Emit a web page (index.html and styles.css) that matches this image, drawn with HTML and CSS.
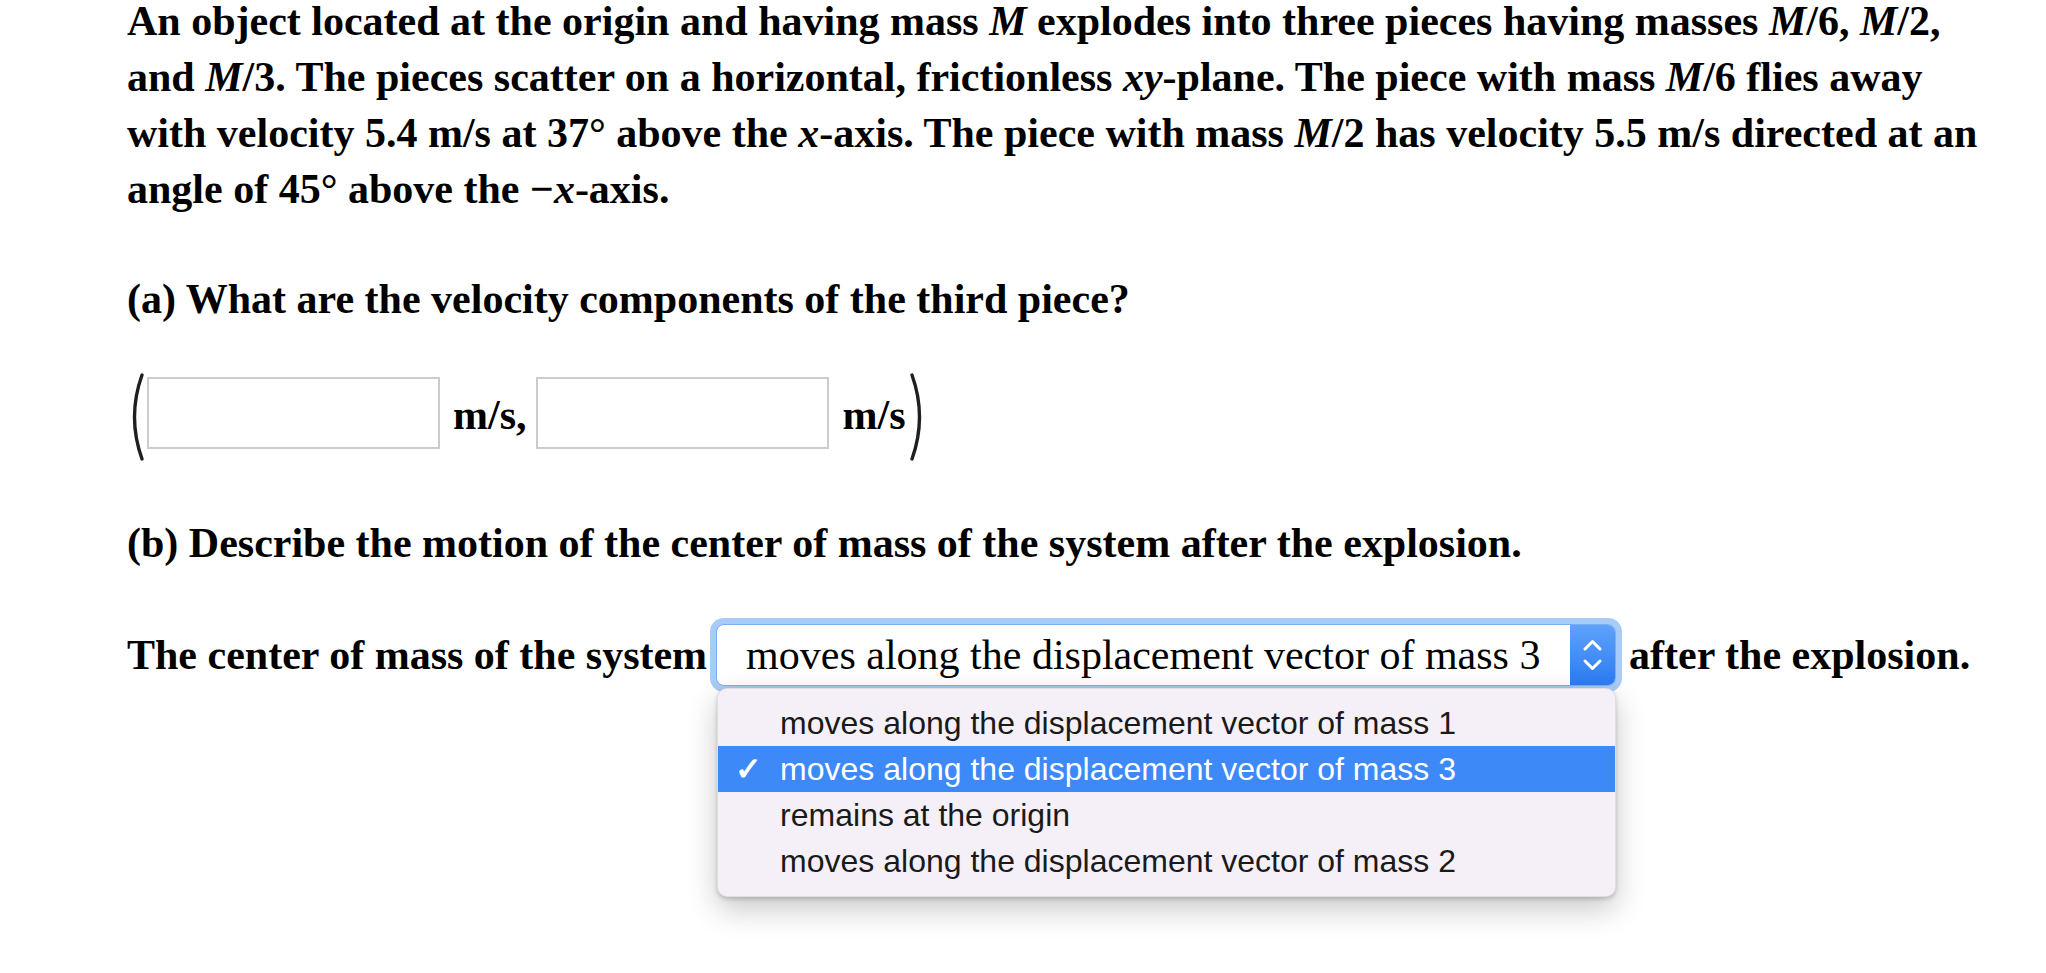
FILE: index.html
```html
<!DOCTYPE html>
<html>
<head>
<meta charset="utf-8">
<link rel="stylesheet" href="styles.css">
</head>
<body>
<div class="page">
  <p class="problem">An object located at the origin and having mass <i>M</i> explodes into three pieces having masses <i>M</i>/6, <i>M</i>/2, and <i>M</i>/3. The pieces scatter on a horizontal, frictionless <i>xy</i>-plane. The piece with mass <i>M</i>/6 flies away with velocity 5.4 m/s at 37° above the <i>x</i>-axis. The piece with mass <i>M</i>/2 has velocity 5.5 m/s directed at an angle of 45° above the −<i>x</i>-axis.</p>

  <p class="question">(a) What are the velocity components of the third piece?</p>

  <div class="answer-row">
    <svg class="paren" viewBox="0 0 18 88" width="18" height="88"><path d="M15 2 Q0 44 15 86" fill="none" stroke="#1f1f1f" stroke-width="3.4" stroke-linecap="round"/></svg>
    <input class="box box-first" type="text">
    <span class="unit">m/s,</span>
    <input class="box box-second" type="text">
    <span class="unit unit-last">m/s</span>
    <svg class="paren paren-right" viewBox="0 0 18 88" width="18" height="88"><path d="M3 2 Q18 44 3 86" fill="none" stroke="#1f1f1f" stroke-width="3.4" stroke-linecap="round"/></svg>
  </div>

  <p class="question question-b">(b) Describe the motion of the center of mass of the system after the explosion.</p>

  <div class="select-row">
    <span class="label">The center of mass of the system</span>
    <div class="select-wrap">
      <div class="select">
        <span class="select-text">moves along the displacement vector of mass 3</span>
        <span class="stepper">
          <svg viewBox="0 0 45 60" width="45" height="60"><path d="M15 24 L22.5 16.5 L30 24" fill="none" stroke="#fff" stroke-width="3" stroke-linecap="round" stroke-linejoin="round"/><path d="M15 36 L22.5 43.5 L30 36" fill="none" stroke="#fff" stroke-width="3" stroke-linecap="round" stroke-linejoin="round"/></svg>
        </span>
      </div>
      <ul class="menu">
        <li class="item">moves along the displacement vector of mass 1</li>
        <li class="item item-selected"><span class="check">✓</span>moves along the displacement vector of mass 3</li>
        <li class="item">remains at the origin</li>
        <li class="item">moves along the displacement vector of mass 2</li>
      </ul>
    </div>
    <span class="label label-after">after the explosion.</span>
  </div>
</div>
</body>
</html>
```

FILE: styles.css
```css
html, body {
  margin: 0;
  padding: 0;
  background: #ffffff;
}

body {
  width: 2046px;
  height: 973px;
  overflow: hidden;
  font-family: "Liberation Serif", "Times New Roman", serif;
  color: #000;
}

.page {
  padding-left: 127px;
}

.problem {
  margin: -7px 0 0 0;
  width: 1868px;
  font-size: 42px;
  font-weight: bold;
  line-height: 56px;
}

.question {
  margin: 54px 0 0 0;
  font-size: 42px;
  font-weight: bold;
  line-height: 56px;
}

.answer-row {
  display: flex;
  align-items: flex-start;
  margin-top: 46px;
  height: 88px;
}

.paren {
  display: block;
  flex: none;
}

.box {
  flex: none;
  box-sizing: border-box;
  width: 293px;
  height: 72px;
  margin: 4px 0 0 2px;
  border: 2px solid #cccccc;
  background: #fff;
  padding: 0;
  outline: none;
}

.box-second {
  margin-left: 9px;
}

.unit {
  margin: 14px 0 0 13px;
  font-size: 42px;
  font-weight: bold;
  line-height: 56px;
}

.unit-last {
  margin-left: 14px;
}

.paren-right {
  margin-left: 3px;
}

.question-b {
  margin-top: 54px;
}

.select-row {
  display: flex;
  align-items: baseline;
  margin-top: 53px;
}

.label {
  font-size: 42px;
  font-weight: bold;
  line-height: 56px;
}

.label-after {
  margin-left: 13px;
}

.select-wrap {
  position: relative;
  margin-left: 9px;
}

.select {
  box-sizing: border-box;
  width: 900px;
  height: 62px;
  display: flex;
  align-items: stretch;
  justify-content: space-between;
  background: #fff;
  border: 1px solid #7dadef;
  border-radius: 8px;
  box-shadow: 0 0 0 6px #a8cbf7;
  padding-left: 29px;
}

.select-text {
  font-size: 42px;
  line-height: 60px;
  font-weight: normal;
}

.stepper {
  flex: none;
  width: 45px;
  border-radius: 0 7px 7px 0;
  background: linear-gradient(#5ea2fa, #2b7bf1);
}

.stepper svg {
  display: block;
}

.menu {
  position: absolute;
  left: 1px;
  top: 64px;
  width: 899px;
  box-sizing: border-box;
  margin: 0;
  padding: 11px 0 12px 0;
  list-style: none;
  background: #f5f0f7;
  border-radius: 10px;
  border: 1px solid rgba(0, 0, 0, 0.08);
  box-shadow: 0 12px 30px rgba(0, 0, 0, 0.22), 0 2px 4px rgba(0, 0, 0, 0.18);
  font-family: "Liberation Sans", Arial, sans-serif;
  font-size: 32px;
  color: #1a1a1a;
}

.item {
  position: relative;
  height: 46px;
  line-height: 46px;
  padding-left: 62px;
  white-space: nowrap;
}

.item-selected {
  background: #3d89f7;
  color: #fff;
}

.check {
  position: absolute;
  left: 17px;
  top: 0;
  font-size: 32px;
  font-weight: bold;
}
```
